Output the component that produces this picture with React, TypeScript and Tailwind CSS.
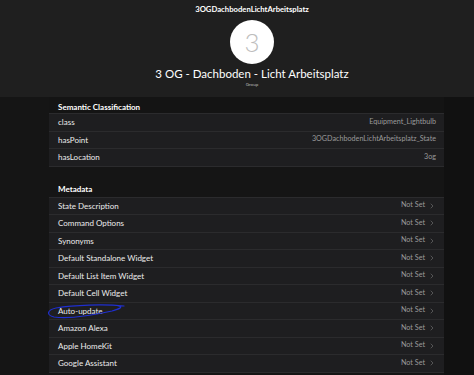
import { ChevronRight } from "lucide-react";

const semantic = [
  { label: "class", value: "Equipment_Lightbulb" },
  { label: "hasPoint", value: "3OGDachbodenLichtArbeitsplatz_State" },
  { label: "hasLocation", value: "3og" },
];

const metadata = [
  "State Description",
  "Command Options",
  "Synonyms",
  "Default Standalone Widget",
  "Default List Item Widget",
  "Default Cell Widget",
  "Auto-update",
  "Amazon Alexa",
  "Apple HomeKit",
  "Google Assistant",
];

function Row({ label, value, chevron }: { label: string; value: string; chevron?: boolean }) {
  return (
    <div className="h-[17.5px] flex items-center justify-between pl-[9px] pr-[8px] bg-[#1e1e20] border-b border-[#2b2b2d]">
      <span className="text-[8px] text-[#ececec]">{label}</span>
      <span className="flex items-center gap-[3px] text-[7.2px] text-[#9a9a9a]">
        {value}
        {chevron && <ChevronRight size={8} strokeWidth={1.5} className="text-[#8a8a8a]" />}
      </span>
    </div>
  );
}

export default function App() {
  return (
    <div
      className="w-[474px] h-[375px] overflow-hidden bg-[#151515] relative"
      style={{ fontFamily: 'Lato, "Noto Sans", sans-serif' }}
    >
      <header className="h-[97px] bg-[#1f1f1f] flex flex-col items-center pt-[4px] pl-[30px]">
        <p className="text-[7.7px] font-bold text-white leading-[10px]">3OGDachbodenLichtArbeitsplatz</p>
        <div className="mt-[6px] w-[44px] h-[44px] rounded-full bg-white flex items-center justify-center">
          <span className="text-[26px] font-light text-[#bdbdbd] leading-none">3</span>
        </div>
        <h1 className="mt-[2px] text-[11.5px] text-white leading-[16px]">3 OG - Dachboden - Licht Arbeitsplatz</h1>
        <p className="text-[4.5px] text-[#bbbbbb]">Group</p>
      </header>
      <div className="flex h-[278px]">
        <div className="w-[49px]" />
        <main className="flex-1 bg-[#151515]">
          <h2 className="h-[16px] flex items-end pl-[9px] text-[8px] font-bold text-white leading-[12px] bg-[#141414]">
            Semantic Classification
          </h2>
          <div className="border-t border-[#2b2b2d]">
            {semantic.map((r) => (
              <Row key={r.label} label={r.label} value={r.value} />
            ))}
          </div>
          <h2 className="h-[30px] flex items-end pb-[2px] pl-[9px] text-[8px] font-bold text-white leading-[12px]">
            Metadata
          </h2>
          <div className="border-t border-[#2b2b2d]">
            {metadata.map((m) => (
              <Row key={m} label={m} value="Not Set" chevron />
            ))}
          </div>
        </main>
        <div className="w-[30px] bg-[#111111]" />
      </div>
      <svg className="absolute left-[44px] top-[302px]" width="90" height="20" viewBox="0 0 90 20" fill="none">
        <path
          d="M80 4 C60 2 30 3 12 6 C3 8 2 13 10 15 C25 17 50 13 68 9 C75 7 80 5 74 4"
          stroke="#1f2fd0"
          strokeWidth="1.2"
          strokeLinecap="round"
        />
      </svg>
    </div>
  );
}
